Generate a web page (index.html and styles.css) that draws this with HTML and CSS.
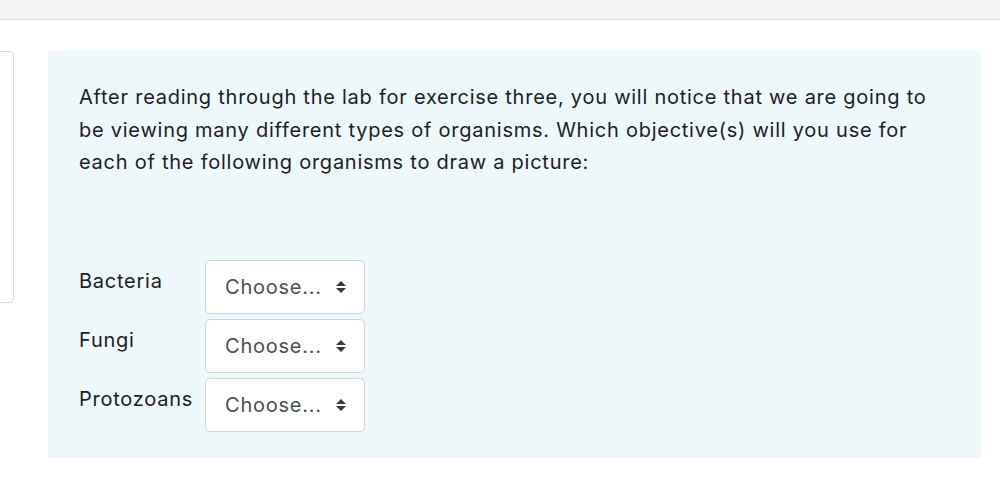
FILE: index.html
```html
<!DOCTYPE html>
<html lang="en">
<head>
    <meta charset="UTF-8">
    <meta name="viewport" content="width=device-width, initial-scale=1.0">
    <title>Question</title>
    <link rel="stylesheet" href="styles.css">
</head>
<body>
    <div class="topbar"></div>

    <div class="page">
        <!-- Левая панель навигации -->
        <div class="side-box"></div>

        <!-- Формулировка вопроса -->
        <div class="formulation">
            <p class="qtext">After reading through the lab for exercise three, you will notice that we are going to be viewing many different types of organisms. Which objective(s) will you use for each of the following organisms to draw a picture:</p>

            <div class="answers">
                <label class="answer-label" for="sub0">Bacteria</label>
                <div class="select-wrap">
                    <select id="sub0" class="custom-select">
                        <option>Choose...</option>
                    </select>
                    <svg class="arrows" width="10" height="14" viewBox="0 0 10 14"><path d="M5 1 L10 6 H0 Z M5 13 L10 8 H0 Z" fill="#343a40"/></svg>
                </div>

                <label class="answer-label" for="sub1">Fungi</label>
                <div class="select-wrap">
                    <select id="sub1" class="custom-select">
                        <option>Choose...</option>
                    </select>
                    <svg class="arrows" width="10" height="14" viewBox="0 0 10 14"><path d="M5 1 L10 6 H0 Z M5 13 L10 8 H0 Z" fill="#343a40"/></svg>
                </div>

                <label class="answer-label" for="sub2">Protozoans</label>
                <div class="select-wrap">
                    <select id="sub2" class="custom-select">
                        <option>Choose...</option>
                    </select>
                    <svg class="arrows" width="10" height="14" viewBox="0 0 10 14"><path d="M5 1 L10 6 H0 Z M5 13 L10 8 H0 Z" fill="#343a40"/></svg>
                </div>
            </div>
        </div>
    </div>
</body>
</html>
```

FILE: styles.css
```css
body {
    margin: 0;
    padding: 0;
    font-family: Inter, "Noto Sans", sans-serif;
    letter-spacing: 0.75px;
    color: #1d2125;
    background: #fff;
}

.topbar {
    height: 19px;
    background: #f4f4f4;
    border-bottom: 1px solid #dedede;
}

.page {
    display: flex;
    align-items: flex-start;
    padding-top: 31px;
}

/* Стиль боковой рамки */
.side-box {
    width: 20px;
    height: 250px;
    margin-left: -8px;
    border: 1px solid #dcdcdc;
    border-radius: 4px;
    background: #fff;
}

.formulation {
    width: 933px;
    margin-left: 34px;
    padding: 30px 31px 26px;
    box-sizing: border-box;
    background: #eef7fa;
    border-radius: 3px;
}

.qtext {
    margin: 0 0 81px;
    font-size: 20px;
    line-height: 32.5px;
}

.answers {
    display: grid;
    grid-template-columns: auto auto;
    justify-content: start;
    column-gap: 12px;
    row-gap: 5px;
}

.answer-label {
    font-size: 20px;
    line-height: 28px;
    padding-top: 7px;
}

.select-wrap {
    position: relative;
    width: 160px;
}

.custom-select {
    appearance: none;
    -webkit-appearance: none;
    width: 160px;
    height: 54px;
    padding: 0 40px 0 19px;
    font-family: Inter, "Noto Sans", sans-serif;
    letter-spacing: 0.75px;
    font-size: 20px;
    color: #495057;
    background: #fff;
    border: 1px solid #cfd4d9;
    border-radius: 5px;
}

.arrows {
    position: absolute;
    right: 19px;
    top: 20px;
    pointer-events: none;
}
```
